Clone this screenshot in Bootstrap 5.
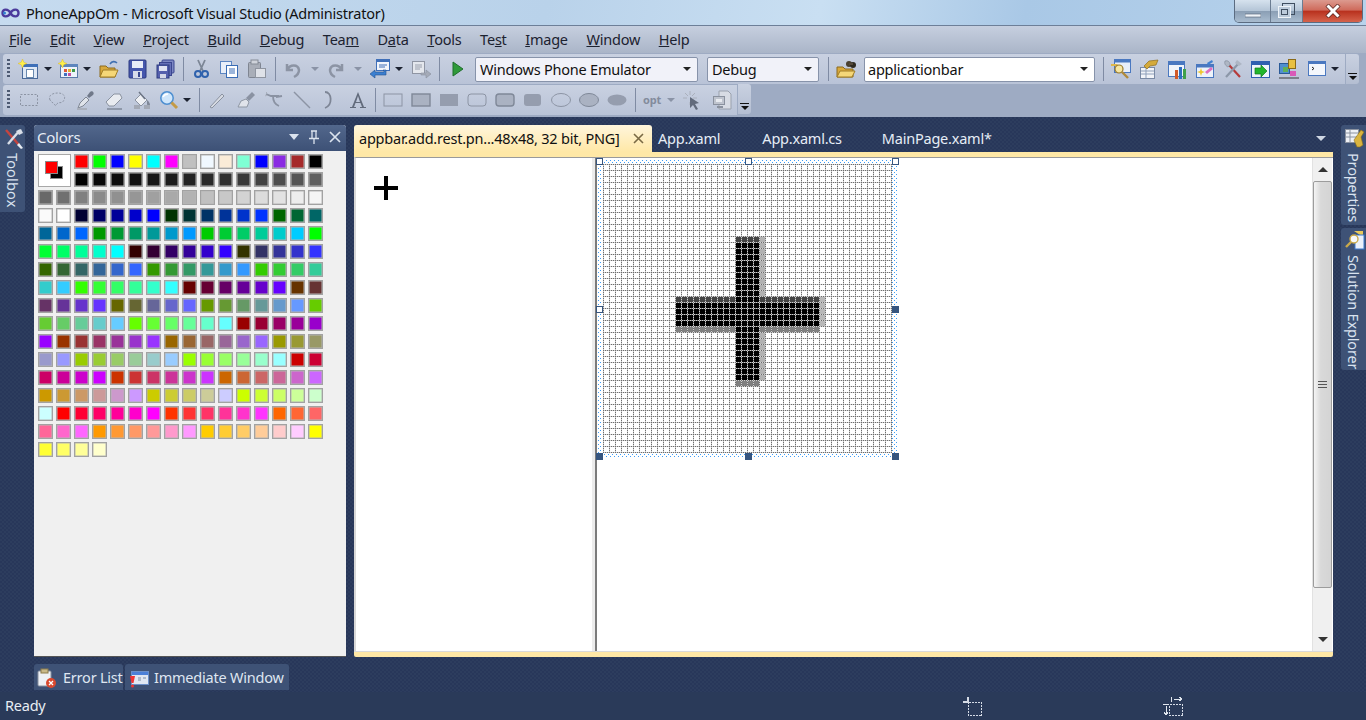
<!DOCTYPE html>
<html lang="en">
<head>
<meta charset="utf-8">
<title>PhoneAppOm - Microsoft Visual Studio</title>
<link rel="stylesheet" href="https://cdn.jsdelivr.net/npm/bootstrap@5.3.0/dist/css/bootstrap.min.css">
<style>
html,body{height:720px;overflow:hidden}
body{width:1366px;font-family:"Noto Sans","Open Sans","Liberation Sans",sans-serif;font-size:14.5px;letter-spacing:-.22px;background:#2b3a59;color:#1b1b1b}
.app-col{height:720px}
.title-strip{height:26px;background:linear-gradient(100deg,#c6dbef 0,#b9d2ea 40%,#c9dff2 60%,#a9c8e6 75%,#b8d3ec 100%);border-bottom:1px solid #6d7f98;flex:none}
.title-logo{margin:8px 0 0 1px}
.title-txt{margin:3px 0 0 6px;font-size:14.5px;color:#111;white-space:nowrap}
.win-btns{margin-right:3px;height:23px;border:1px solid #5b6b80;border-top:0;border-radius:0 0 5px 5px;overflow:hidden}
.wb-min{width:36px;background:linear-gradient(#d6e2ee 0,#b3c4d6 50%,#8b9fb5 52%,#a9bccf 100%);border-right:1px solid #6b7d92}
.wb-max{width:32px;background:linear-gradient(#d6e2ee 0,#b3c4d6 50%,#8b9fb5 52%,#a9bccf 100%);border-right:1px solid #6b7d92}
.wb-close{width:59px;background:linear-gradient(#dc9a8f 0,#cf6b5c 45%,#b9321f 52%,#d5634c 100%)}
.menu-strip{height:27px;background:linear-gradient(#c6cfdf,#aab5c8);flex:none}
.menu-strip .nav-link{padding:0;color:#1c2230;font-size:14.5px;line-height:27px}
.mi1{margin-left:9px}.mi2{margin-left:18.6px}
.bars{height:64px;background:#9eabc3;padding-top:1px;flex:none}
.tbar{height:30px;margin-left:3px;background:linear-gradient(#c9d1e1,#b9c3d7);border-radius:3px 0 0 3px;padding-left:4px}
.tbar-a{width:1342px}.tbar-b{width:734px;margin-top:1px}
.more{width:13px;height:30px;background:linear-gradient(#c9d1e1,#b4bed2);border-radius:0 3px 3px 0;margin-left:1px;padding-bottom:4px}
.more i{display:block;width:9px;height:1px;background:#111;margin:0 auto 2px}
.more b{display:block;width:0;margin:0 auto;border:4px solid transparent;border-bottom:0;border-top-color:#111}
.grip{width:3px;height:20px;background:repeating-linear-gradient(#4d5a72 0 2px,transparent 2px 4px);flex:none}
.sep{width:1px;height:24px;background:#7f8ba3;flex:none}
.ic{width:20px;height:20px;flex:none;display:block}
.car{width:0;flex:none;border:4px solid transparent;border-bottom:0;border-top-color:#1c2230;box-sizing:content-box}
.car-off{border-top-color:#8a93a6}
.g4{margin-left:4px}.g5{margin-left:5px}.g6{margin-left:6px}.g7{margin-left:7px}.g8{margin-left:8px}.g9{margin-left:9px}.g10{margin-left:10px}
.combo{height:25px;background:#f1f2f9;border:1px solid #8793aa;border-radius:2px;padding:0 4px;font-size:14.5px;line-height:23px;color:#111;white-space:nowrap;flex:none}
.combo .car{border-top-color:#222;margin-right:2px}
.cb-a{width:223px}.cb-b{width:112px}.cb-c{width:231px;background:#fff;padding-left:3px}
.opt-txt{width:20px;font-size:11px;font-weight:700;color:#838b9c;flex:none}
.work{height:575px;flex:none;background:repeating-conic-gradient(#2d3d5e 0 25%,#28375a 0 50%) 0 0/4px 4px}
.rail-l{width:34px;flex:none}
.rail-r{width:25px;flex:none;margin-left:8px;padding-top:8px}
.side-tab{background:#3e5276;color:#d9e2ef;font-size:14.5px;letter-spacing:-.15px;writing-mode:vertical-rl;line-height:25px;width:25px;white-space:nowrap}
.st-box{height:87px;margin-top:8px;border-radius:0 3px 3px 0;padding-top:3px;letter-spacing:.15px}
.st-p{height:100px;border-radius:3px 0 0 3px;padding-top:3px;margin-bottom:3px}
.st-s{height:142px;border-radius:3px 0 0 3px;padding-top:2px}
.st-ic{margin-bottom:5px;margin-left:2px}
.st-ic-l{margin-bottom:3px;margin-left:3px}
.mid{width:1299px;flex:none}
.top-row{height:532px;margin-top:8px}
.colors-box{width:312px;flex:none;background:#f0f0f0;border:0;border-radius:3px 3px 0 0;border-bottom:1px solid #555}
.colors-head{height:26px;background:linear-gradient(#52678c,#3d5176);color:#e8eef6;font-size:15px;padding:0 5px 2px 3px;border-radius:3px 3px 0 0;flex:none}
.colors-head svg{flex:none}
.swatches{margin:3px 0 0 4px;display:grid;grid-template-columns:repeat(16,15px);grid-auto-rows:15px;gap:3px}
.sw{border:1px solid #a2a2a2;box-shadow:inset 0 0 0 .5px #b5b5b5}
.sw-big{grid-column:span 2;grid-row:span 2;border:1px solid #a8a8a8;background:#fff;position:relative}
.fg-c,.bg-c{position:absolute;width:13px;height:13px;border:1px solid #8a8a8a}
.fg-c{left:6px;top:6px;background:#f00;z-index:1}
.bg-c{left:11px;top:11px;background:#000}
.doc{width:979px;margin-left:8px;flex:none}
.doc-tabs{height:27px;flex:none}
.dt-on{width:298px;height:27px;background:linear-gradient(#fff5dc,#ffe8a6);border-radius:3px 3px 0 0;padding:0 8px 0 5px;font-size:14.5px;color:#111;white-space:nowrap;flex:none}
.dt-txt{color:#e6edf6;font-size:14.5px;white-space:nowrap;flex:none}
.dt1{margin-left:6px}.dt2{margin-left:42px}.dt3{margin-left:40px}
.dt-drop{margin-left:auto;margin-right:7px;border:5px solid transparent;border-bottom:0;border-top-color:#cfd7e3;width:0;box-sizing:content-box}
.doc-edge{height:5px;background:#ffe8a6;flex:none}
.doc-body{height:494px;flex:none;background:#fff;margin-left:0;border-top:1px solid #9a9a9a;border-left:2px solid #d8d8d8}
.doc-end{height:6px;flex:none;background:#ffe8a6;border-top:1px solid #dadada;border-radius:0 0 2px 2px}
.preview{width:236px;flex:none;padding:6px 0 0 6px}
.splitter{width:5px;flex:none;background:#ececec;border-right:2px solid #7b7b7b}
.canvas-pane{flex:1 1 auto;min-width:0}
.sel-frame{position:relative;width:299px;height:297px;margin:2px 0 0 1px}
.sel-frame svg{display:block}
.hd{position:absolute;width:7px;height:7px;border:1px solid #36557f;background:#36557f}
.hd-w{background:#fff}
.hl{left:-2px}.hc{left:147px}.hr{left:294px}
.ht{top:-2px}.hm{top:146px}.hb{top:293px}
.scr{width:20px;flex:none;margin-right:1px;background:#f0f0f0;border-left:1px solid #e2e2e2;padding-top:0}
.scr-btn{height:23px;flex:none}
.scr-up{width:0;border:5px solid transparent;border-top:0;border-bottom-color:#333}
.scr-dn{width:0;border:5px solid transparent;border-bottom:0;border-top-color:#333}
.scr-thumb{height:407px;flex:none;background:linear-gradient(90deg,#f4f4f4,#d9d9d9 40%,#d4d4d4);border:1px solid #9c9c9c;border-radius:2px}
.scr-lines{width:9px;height:7px;background:repeating-linear-gradient(#555 0 1px,transparent 1px 3px)}
.bot-row{height:26px;margin-top:7px}
.bot-tab{height:26px;background:#3e5276;color:#dfe6f1;font-size:14.5px;border-radius:3px 3px 0 0;white-space:nowrap;flex:none;padding-top:2px}
.bt1{width:89px;padding-left:2px}.bt2{width:164px;margin-left:2px;padding-left:4px}
.bt-txt{margin-left:5px}
.bt1 .bt-txt{margin-left:7px}
.stat{height:28px;flex:none;background:#2a3a59;color:#e8edf4;font-size:14.5px;padding-left:5px}
.stat-a{margin-left:917px}.stat-b{margin-left:181px}
</style>
</head>
<body>
<div class="app-col d-flex flex-column">

<header class="title-strip d-flex align-items-start">
  <svg class="title-logo" width="19" height="10" viewBox="0 0 19 10"><path d="M1.500 5c0-5 6-4 8 0s8 5 8 0-6-4-8 0-8 5-8 0z" fill="none" stroke="#4b3a9c" stroke-width="2.400"/><circle cx="3.500" cy="5" r="1.500" fill="#2f7fd0"/></svg>
  <span class="title-txt">PhoneAppOm - Microsoft Visual Studio (Administrator)</span>
  <div class="win-btns d-flex ms-auto">
    <div class="wb-min d-flex align-items-center justify-content-center"><svg width="16" height="14" viewBox="0 0 16 14"><rect x="0" y="10" width="16" height="3" fill="#eef3f8" stroke="#4d5d70" stroke-width=".6"/></svg></div>
    <div class="wb-max d-flex align-items-center justify-content-center"><svg width="17" height="16" viewBox="0 0 17 16"><rect x="4.500" y=".5" width="12" height="11" fill="none" stroke="#3f4e60"/><rect x=".5" y="3.500" width="12" height="11" fill="#bccbdb" stroke="#eef3f8"/><rect x="3.500" y="6.500" width="6" height="5" fill="none" stroke="#3f4e60"/></svg></div>
    <div class="wb-close d-flex align-items-center justify-content-center"><svg width="16" height="14" viewBox="0 0 16 14"><path d="M2 1l12 12M14 1L2 13" stroke="#5c2a25" stroke-width="4.400"/><path d="M2.500 1.500l11 11M13.500 1.500l-11 11" stroke="#fff" stroke-width="3"/></svg></div>
  </div>
</header>

<nav class="menu-strip nav align-items-center flex-nowrap">
  <a class="nav-link mi1" href="#"><u>F</u>ile</a>
  <a class="nav-link mi2" href="#"><u>E</u>dit</a>
  <a class="nav-link mi2" href="#"><u>V</u>iew</a>
  <a class="nav-link mi2" href="#"><u>P</u>roject</a>
  <a class="nav-link mi2" href="#"><u>B</u>uild</a>
  <a class="nav-link mi2" href="#"><u>D</u>ebug</a>
  <a class="nav-link mi2" href="#">Tea<u>m</u></a>
  <a class="nav-link mi2" href="#">D<u>a</u>ta</a>
  <a class="nav-link mi2" href="#"><u>T</u>ools</a>
  <a class="nav-link mi2" href="#">Te<u>s</u>t</a>
  <a class="nav-link mi2" href="#"><u>I</u>mage</a>
  <a class="nav-link mi2" href="#"><u>W</u>indow</a>
  <a class="nav-link mi2" href="#"><u>H</u>elp</a>
</nav>

<section class="bars">
  <div class="d-flex">
  <div class="tbar tbar-a d-flex align-items-center">
    <span class="grip"></span>
    <svg class="ic g8" viewBox="0 0 20 20"><rect x="4.500" y="5.500" width="15" height="14" fill="#dfe8f5" stroke="#4a6a9a"/><rect x="4" y="5" width="16" height="3" fill="#3f70b8"/><rect x="8.500" y="10.500" width="7" height="8" fill="#fff" stroke="#6a8ab0"/><path d="M4.500 0l1.300 3.200 3.200 1.300-3.200 1.300-1.300 3.200-1.300-3.200L0 4.500l3.200-1.300z" fill="#fff04a" stroke="#d8b020" stroke-width=".4"/></svg>
    <span class="car g6"></span>
    <svg class="ic g6" viewBox="0 0 20 20"><rect x="2.500" y="5.500" width="17" height="13" fill="#eef3fa" stroke="#5a7aa8"/><rect x="2" y="5" width="18" height="3" fill="#5f86bd"/><rect x="6" y="10" width="3" height="3" fill="#e05a3a"/><rect x="10" y="10" width="3" height="3" fill="#e6b030"/><rect x="14" y="10" width="3" height="3" fill="#3f9a4a"/><rect x="6" y="14" width="3" height="3" fill="#3f70c0"/><rect x="10" y="14" width="3" height="3" fill="#c04fa0"/><path d="M4.500 0l1.300 3.200 3.200 1.300-3.200 1.300-1.300 3.200-1.300-3.200L0 4.500l3.200-1.300z" fill="#fff04a" stroke="#d8b020" stroke-width=".4"/></svg>
    <span class="car g5"></span>
    <svg class="ic g8" viewBox="0 0 20 20"><path d="M1 7h6l2 2h7v9H1z" fill="#d9a93c" stroke="#8c6b1e"/><path d="M1 18l3-7h15l-3 7z" fill="#f5d778" stroke="#a07d26"/><path d="M11 5c2-3 5-3 7-1" fill="none" stroke="#3f6fb0" stroke-width="1.600"/></svg>
    <svg class="ic g9" viewBox="0 0 20 20"><rect x="1" y="1" width="17" height="18" rx="1" fill="#4657ad" stroke="#2c3a80"/><rect x="4" y="2" width="11" height="7" fill="#e8ecf8"/><rect x="5" y="12" width="9" height="7" fill="#d8dcea"/><rect x="10" y="13" width="2" height="5" fill="#3a4890"/></svg>
    <svg class="ic g8" viewBox="0 0 20 20"><rect x="6" y="1" width="12" height="13" rx="1" fill="#7d88c4" stroke="#3b4690"/><rect x="3.500" y="3.500" width="12" height="13" fill="#6570b8" stroke="#3b4690"/><rect x="1" y="6" width="12" height="13" fill="#5560ad" stroke="#2c3a80"/><rect x="3" y="7" width="8" height="5" fill="#dfe3f3"/><rect x="4" y="15" width="6" height="4" fill="#d4d8e8"/></svg>
    <span class="sep g7"></span>
    <svg class="ic g8" viewBox="0 0 20 20"><path d="M6 1l5 11M13 1L8 12" stroke="#7c8695" stroke-width="1.800"/><circle cx="6" cy="15" r="3" fill="none" stroke="#2f62ad" stroke-width="2"/><circle cx="13" cy="15" r="3" fill="none" stroke="#2f62ad" stroke-width="2"/></svg>
    <svg class="ic g7" viewBox="0 0 20 20"><rect x="1.500" y="2.500" width="11" height="12" fill="#e9eff9" stroke="#5c86c2"/><rect x="7.500" y="6.500" width="11" height="12" fill="#fff" stroke="#3a6db5"/><path d="M10 10h6M10 12h6M10 14h6" stroke="#3a6db5"/></svg>
    <svg class="ic g8" viewBox="0 0 20 20"><rect x="1.500" y="3.500" width="12" height="15" rx="1" fill="#a9aeb8" stroke="#7f8591"/><rect x="4" y="1" width="7" height="4" fill="#cfd3da" stroke="#858b96"/><rect x="8.500" y="9.500" width="10" height="9" fill="#dfe2e8" stroke="#8f95a0"/></svg>
    <span class="sep g8"></span>
    <svg class="ic g7" viewBox="0 0 20 20"><path d="M4 5v6h6M4 11c3-6 11-6 12 0 0 4-3 6-5 7" fill="none" stroke="#8c94a4" stroke-width="2.500"/></svg>
    <span class="car car-off g8"></span>
    <svg class="ic g7" viewBox="0 0 20 20"><path d="M16 5v6h-6M16 11c-3-6-11-6-12 0 0 4 3 6 5 7" fill="none" stroke="#8c94a4" stroke-width="2.500"/></svg>
    <span class="car car-off g8"></span>
    <svg class="ic g8" viewBox="0 0 20 20"><rect x="6.500" y=".5" width="13" height="11" fill="#f2f5fb" stroke="#3f6fb8"/><rect x="7" y="1" width="12" height="2" fill="#3f6fb8"/><path d="M9 6h8M9 8h6" stroke="#3f6fb8"/><path d="M0 15l5-4v2h9v-1l-1-1h3v5H5v3z" fill="#3b7fd0" stroke="#22508f" stroke-width=".6"/></svg>
    <span class="car g5"></span>
    <svg class="ic g8" viewBox="0 0 20 20"><rect x="1.500" y="2.500" width="12" height="12" fill="#e4e7ed" stroke="#8f95a3"/><path d="M4 6h7M4 8h7M4 10h5" stroke="#9aa0ad"/><path d="M10 14h5v-3l5 4-5 4v-3h-5z" fill="#a5abb8" stroke="#8a909e" stroke-width=".6"/></svg>
    <span class="sep g8"></span>
    <svg class="ic g8" viewBox="0 0 20 20"><path d="M5 3l10 7-10 7z" fill="#2f9a3a" stroke="#1f6f2c"/></svg>
    <div class="combo cb-a g7 d-flex align-items-center justify-content-between"><span>Windows Phone Emulator</span><span class="car"></span></div>
    <div class="combo cb-b g9 d-flex align-items-center justify-content-between"><span>Debug</span><span class="car"></span></div>
    <span class="sep g9"></span>
    <svg class="ic g7" viewBox="0 0 20 20"><path d="M1 8h6l2 2h8v8H1z" fill="#d9a93c" stroke="#8c6b1e"/><path d="M1 18l3-6h15l-3 6z" fill="#f5d778" stroke="#a07d26"/><circle cx="13" cy="5" r="3" fill="#4a4030"/><circle cx="17" cy="6" r="3" fill="#2f2a20"/><rect x="13" y="4" width="4" height="2" fill="#55493a"/></svg>
    <div class="combo cb-c g8 d-flex align-items-center justify-content-between"><span>applicationbar</span><span class="car"></span></div>
    <span class="sep g8"></span>
    <svg class="ic g7" viewBox="0 0 20 20"><rect x="3.500" y=".5" width="16" height="13" fill="#e8eef8" stroke="#4a78c0"/><rect x="4" y="1" width="15" height="2.500" fill="#4a78c0"/><path d="M0 5h6l2 2H0z" fill="#e0b84a"/><circle cx="8" cy="10" r="4" fill="#f7e6a2" stroke="#9a7a2a" stroke-width="1.200"/><path d="M11 13l6 6" stroke="#b08a3a" stroke-width="2.400"/></svg>
    <svg class="ic g8" viewBox="0 0 20 20"><rect x="1.500" y="8.500" width="14" height="11" fill="#f2f4f8" stroke="#7a8aa5"/><path d="M2 12h13M2 15h13M7 9v10" stroke="#8fa0ba"/><path d="M5 7l5-5 9-1-2 5-6 1-3 3z" fill="#d4aa3c" stroke="#8f6f20" stroke-width=".7"/></svg>
    <svg class="ic g8" viewBox="0 0 20 20"><rect x="1.500" y="2.500" width="16" height="15" fill="#f0f4fa" stroke="#4a78c0"/><rect x="2" y="3" width="15" height="3" fill="#4a78c0"/><rect x="8" y="11" width="3" height="9" fill="#d05a2a"/><rect x="12" y="8" width="3" height="12" fill="#2f6fc0"/><rect x="16" y="10" width="3" height="10" fill="#3fa04a"/></svg>
    <svg class="ic g8" viewBox="0 0 20 20"><rect x="1.500" y="5.500" width="17" height="13" fill="#eef3fa" stroke="#4a78c0"/><rect x="2" y="6" width="16" height="2.500" fill="#4a78c0"/><path d="M6 9l1 3 3 1-3 1-1 3-1-3-3-1 3-1z" fill="#f0c830"/><path d="M10 13l6-5 2 2-6 5z" fill="#dd6fc0"/><path d="M12 4l5-3 1 2-5 3z" fill="#3f7fd0"/></svg>
    <svg class="ic g8" viewBox="0 0 20 20"><path d="M17 18L6 6" stroke="#b53a3a" stroke-width="2.200"/><path d="M3 18L16 4" stroke="#8c97a8" stroke-width="2.200"/><path d="M14 1l5 4-3 2-4-3z" fill="#aeb6c4"/><path d="M2 2c3-1 5 1 5 4L5 8C3 7 1 5 2 2z" fill="#aeb6c4" stroke="#7a8494" stroke-width=".6"/></svg>
    <svg class="ic g8" viewBox="0 0 20 20"><rect x=".5" y="2.500" width="18" height="16" fill="#eef3fa" stroke="#2f5fb0"/><rect x="1" y="3" width="17" height="3" fill="#2f5fb0"/><path d="M4 9h6V6l6 6-6 6v-3H4z" fill="#22b52c" stroke="#137a1c" stroke-width=".7"/></svg>
    <svg class="ic g8" viewBox="0 0 20 20"><rect x=".5" y="4.500" width="10" height="10" fill="#4f8fd0" stroke="#2a5a98"/><rect x="4" y="8" width="5" height="5" fill="#5fb05a"/><rect x="9.500" y=".5" width="7" height="9" fill="#e8c040" stroke="#8a6a18"/><rect x="11" y="12" width="6" height="5" fill="#d95ab8"/><rect y="18" width="20" height="2" fill="#7a808a"/></svg>
    <svg class="ic g8" viewBox="0 0 20 20"><rect x="1.500" y="2.500" width="17" height="14" fill="#f4f7fc" stroke="#4a78c0"/><rect x="2" y="3" width="16" height="2" fill="#4a78c0"/><path d="M5 8l2 1.500L5 11" fill="none" stroke="#222"/></svg>
    <span class="car g4"></span>
  </div>
  <div class="more d-flex flex-column justify-content-end"><i></i><b></b></div>
  </div>

  <div class="d-flex">
  <div class="tbar tbar-b d-flex align-items-center">
    <span class="grip"></span>
    <svg class="ic g9" viewBox="0 0 20 20"><rect x="1.500" y="4.500" width="17" height="11" fill="none" stroke="#8c94a4" stroke-dasharray="2 1.500"/></svg>
    <svg class="ic g8" viewBox="0 0 20 20"><path d="M3 10c-2-5 3-7 8-7s8 3 6 7-4 2-6 3-2 4-3 2-3-2-5-5z" fill="none" stroke="#8c94a4" stroke-dasharray="2 1.500"/></svg>
    <svg class="ic g9" viewBox="0 0 20 20"><path d="M2 18l2-5 6-6 3 3-6 6z" fill="#dfe3ea" stroke="#7f8794"/><path d="M11 6l3-4c2-2 5 1 3 3l-4 3z" fill="#70798a"/><path d="M1 19h10" stroke="#aab0bc" stroke-width="2"/></svg>
    <svg class="ic g8" viewBox="0 0 20 20"><path d="M2 12l8-8h6l2 4-8 8H5z" fill="#e8ebf0" stroke="#8a92a0"/><path d="M3 19h15" stroke="#7a8494" stroke-width="1.400"/></svg>
    <svg class="ic g8" viewBox="0 0 20 20"><path d="M3 10l6-6 6 6-6 6z" fill="#eef0f4" stroke="#8a92a0"/><path d="M7 2l6 7" stroke="#6d7686" stroke-width="1.500"/><path d="M15 10c2 2 3 3 3 5s-3 1-3-1z" fill="#7f8797"/><rect x="2" y="15" width="6" height="4" fill="#a3a9b5"/><rect x="12" y="15" width="6" height="4" fill="#a3a9b5"/></svg>
    <svg class="ic g7" viewBox="0 0 20 20"><circle cx="8" cy="8" r="6.200" fill="#cfe6fb" stroke="#4e8fd0" stroke-width="1.500"/><path d="M4 7c1-2 3-3 5-3" stroke="#fff" stroke-width="1.500" fill="none"/><path d="M12.500 12.500L18 18" stroke="#c49a45" stroke-width="3"/></svg>
    <span class="car g4"></span>
    <span class="sep g8"></span>
    <svg class="ic g7" viewBox="0 0 20 20"><path d="M3 17L15 4l2 2L5 18z" fill="#d6dae2" stroke="#8a92a0"/></svg>
    <svg class="ic g9" viewBox="0 0 20 20"><path d="M2 17l3-6 5-2 3 3-2 5z" fill="#e0e3ea" stroke="#8f97a4"/><path d="M10 8l6-6 3 3-6 6z" fill="#8a92a2"/></svg>
    <svg class="ic g9" viewBox="0 0 20 20"><path d="M1 4l5 2h8M8 6c0 4 1 8 6 10M11 7l6-1" fill="none" stroke="#8a92a2" stroke-width="1.800"/><path d="M1 2l1 1M0 6l2-1" stroke="#aab0bc"/></svg>
    <svg class="ic g7" viewBox="0 0 20 20"><path d="M2 2l16 16" stroke="#8c94a4" stroke-width="1.500"/></svg>
    <svg class="ic g6" viewBox="0 0 20 20"><path d="M7 2c7 0 8 13 0 16" fill="none" stroke="#7d8595" stroke-width="1.800"/></svg>
    <svg class="ic g10" viewBox="0 0 20 20"><path d="M10 2l6 15h2v1h-6v-1h2l-1.500-4h-5L6 17h2v1H2v-1h2zM10 6l-2 6h4z" fill="#626b7c"/></svg>
    <span class="sep g7"></span>
    <svg class="ic g7" viewBox="0 0 20 20"><rect x="1" y="4" width="18" height="12" fill="none" stroke="#8c94a4"/></svg>
    <svg class="ic g8" viewBox="0 0 20 20"><rect x="1" y="4" width="18" height="12" fill="#aab2c2" stroke="#7f8898" stroke-width="1.400"/></svg>
    <svg class="ic g8" viewBox="0 0 20 20"><rect x="1" y="4" width="18" height="12" fill="#959dae"/></svg>
    <svg class="ic g8" viewBox="0 0 20 20"><rect x="1" y="4" width="18" height="12" rx="3" fill="none" stroke="#8c94a4"/></svg>
    <svg class="ic g8" viewBox="0 0 20 20"><rect x="1" y="4" width="18" height="12" rx="3" fill="#aab2c2" stroke="#7f8898" stroke-width="1.400"/></svg>
    <svg class="ic g8" viewBox="0 0 20 20"><rect x="1" y="4" width="17" height="12" rx="3" fill="#959dae"/></svg>
    <svg class="ic g8" viewBox="0 0 20 20"><ellipse cx="10" cy="10" rx="9.500" ry="6.500" fill="none" stroke="#8c94a4"/></svg>
    <svg class="ic g8" viewBox="0 0 20 20"><ellipse cx="10" cy="10" rx="9.500" ry="6.500" fill="#aab2c2" stroke="#7f8898"/></svg>
    <svg class="ic g8" viewBox="0 0 20 20"><ellipse cx="10" cy="10" rx="9.500" ry="5.500" fill="#959dae"/></svg>
    <span class="sep g8"></span>
    <span class="opt-txt g7">opt</span>
    <span class="car car-off g4"></span>
    <svg class="ic g7" viewBox="0 0 20 20"><path d="M8 1v4M8 12v3M1 8h4M11 8h4M3 3l3 3M13 3l-3 3" stroke="#aab0bc"/><path d="M8 7l9 6-4 1 3 5-2 1-3-5-3 3z" fill="#626b7c"/></svg>
    <svg class="ic g10" viewBox="0 0 20 20"><path d="M7 1h9l3 3v15H7z" fill="#d8dce4" stroke="#9aa1ad"/><rect x="1.500" y="6.500" width="11" height="8" fill="#bfc4ce" stroke="#8a919e"/><rect x="4" y="9" width="6" height="3" fill="#e8ebf0"/><path d="M5 17h6" stroke="#8a919e" stroke-width="2"/></svg>
  </div>
  <div class="more d-flex flex-column justify-content-end"><i></i><b></b></div>
  </div>
</section>

<main class="work d-flex">
  <div class="rail-l">
    <div class="side-tab st-box d-flex align-items-center">
      <svg class="st-ic-l" width="20" height="22" viewBox="0 0 20 22"><path d="M2 2l13 15" stroke="#c6443f" stroke-width="2.400"/><path d="M16 2L4 16" stroke="#d8dee8" stroke-width="2.400"/><path d="M12 3l5-2 2 4-4 2z" fill="#d8dee8"/><path d="M15 15l4 5-2 1-4-4z" fill="#e8edf3"/></svg>
      <span>Toolbox</span>
    </div>
  </div>

  <div class="mid d-flex flex-column">
    <div class="top-row d-flex">
      <aside class="card colors-box">
        <div class="colors-head d-flex align-items-center">
          <span>Colors</span>
          <svg class="ms-auto" width="10" height="6" viewBox="0 0 10 6"><path d="M0 0h10L5 6z" fill="#dbe3ee"/></svg>
          <svg class="g10" width="10" height="14" viewBox="0 0 10 14"><path d="M2 1h6M3 1v7M7 1v7M0 8.500h10M5 9v5" stroke="#dbe3ee" stroke-width="1.300" fill="none"/></svg>
          <svg class="g10" width="12" height="12" viewBox="0 0 12 12"><path d="M1 1l10 10M11 1L1 11" stroke="#dbe3ee" stroke-width="1.700"/></svg>
        </div>
        <div class="swatches" id="swatches">
          <div class="sw-big"><span class="bg-c"></span><span class="fg-c"></span></div>
        </div>
      </aside>

      <section class="doc d-flex flex-column">
        <div class="doc-tabs nav d-flex align-items-center flex-nowrap">
          <div class="dt-on d-flex align-items-center justify-content-between">
            <span>appbar.add.rest.pn...48x48, 32 bit, PNG]</span>
            <svg width="11" height="11" viewBox="0 0 11 11"><path d="M1 1l9 9M10 1l-9 9" stroke="#7a6a45" stroke-width="1.600"/></svg>
          </div>
          <span class="dt-txt dt1">App.xaml</span>
          <span class="dt-txt dt2">App.xaml.cs</span>
          <span class="dt-txt dt3">MainPage.xaml*</span>
          <span class="dt-drop"></span>
        </div>
        <div class="doc-edge"></div>
        <div class="doc-body d-flex">
          <div class="preview">
            <svg width="48" height="48" viewBox="0 0 48 48" class="d-block"><path d="M22 12h4v10h10v4H26v10h-4V26H12v-4h10z" fill="#000"/></svg>
          </div>
          <div class="splitter"></div>
          <div class="canvas-pane">
            <div class="sel-frame">
              <svg width="299" height="297" viewBox="0 0 299 297" shape-rendering="crispEdges">
                <defs>
                  <pattern id="dotp" width="4" height="4" patternUnits="userSpaceOnUse">
                    <rect x="0" y="0" width="1" height="1" fill="#3d9cf5"/>
                    <rect x="2" y="2" width="1" height="1" fill="#3d9cf5"/>
                  </pattern>
                  <pattern id="gridp" x="5" y="4" width="6" height="6" patternUnits="userSpaceOnUse">
                    <path d="M0 0h6v1H0zM0 0h1v6H0z" fill="#cfcfcf"/>
                    <path d="M0 0h1v1H0zM2 0h1v1H2zM4 0h1v1H4zM0 2h1v1H0zM0 4h1v1H0z" fill="#6e6e6e"/>
                  </pattern>
                </defs>
                <rect width="299" height="297" fill="#fff"/>
                <rect width="299" height="297" fill="url(#dotp)"/>
                <rect x="4" y="3" width="290" height="290" fill="#fff"/>
                <g transform="translate(5 4)">
                  <rect x="156" y="72" width="6" height="144" fill="#b2b2b2"/>
                  <rect x="216" y="132" width="6" height="30" fill="#b8b8b8"/>
                  <rect x="72" y="132" width="144" height="6" fill="#444"/>
                  <rect x="72" y="162" width="144" height="6" fill="#808080"/>
                  <rect x="132" y="72" width="24" height="6" fill="#444"/>
                  <rect x="132" y="216" width="24" height="6" fill="#808080"/>
                  <rect x="132" y="78" width="24" height="138" fill="#000"/>
                  <rect x="72" y="138" width="144" height="24" fill="#000"/>
                </g>
                <rect x="5" y="4" width="289" height="289" fill="url(#gridp)"/>
              </svg>
              <span class="hd hd-w hl ht"></span><span class="hd hd-w hc ht"></span><span class="hd hd-w hr ht"></span>
              <span class="hd hd-w hl hm"></span><span class="hd hr hm"></span>
              <span class="hd hl hb"></span><span class="hd hc hb"></span><span class="hd hr hb"></span>
            </div>
          </div>
          <div class="scr d-flex flex-column">
            <div class="scr-btn d-flex align-items-center justify-content-center"><span class="scr-up"></span></div>
            <div class="scr-thumb d-flex align-items-center justify-content-center"><span class="scr-lines"></span></div>
            <div class="scr-btn d-flex align-items-center justify-content-center mt-auto"><span class="scr-dn"></span></div>
          </div>
        </div>
        <div class="doc-end"></div>
      </section>
    </div>

    <div class="bot-row d-flex">
      <div class="bot-tab bt1 d-flex align-items-center">
        <svg width="20" height="22" viewBox="0 0 20 22"><rect x="2" y="4" width="13" height="15" rx="1" fill="#eef1f6" stroke="#8a92a0"/><rect x="5" y="2" width="7" height="4" fill="#c9b98a" stroke="#8c7c4c"/><circle cx="15" cy="16" r="5" fill="#d9492f"/><path d="M13 14l4 4M17 14l-4 4" stroke="#fff" stroke-width="1.300"/></svg>
        <span class="bt-txt">Error List</span>
      </div>
      <div class="bot-tab bt2 d-flex align-items-center">
        <svg width="20" height="20" viewBox="0 0 20 20"><rect x="2.500" y="3.500" width="17" height="13" fill="#dfe6f2" stroke="#6a8ec8"/><rect x="3" y="4" width="16" height="3" fill="#4a7fd8"/><path d="M9 10h3M9 12h3M14 10h3" stroke="#7a8aa0"/><path d="M1 8h5l-1.500 7h-2z" fill="#e33"/><circle cx="3.500" cy="18" r="1.500" fill="#e33"/></svg>
        <span class="bt-txt">Immediate Window</span>
      </div>
    </div>
  </div>

  <div class="rail-r">
    <div class="side-tab st-p d-flex align-items-center">
      <svg class="st-ic" width="20" height="20" viewBox="0 0 20 20"><rect x=".5" y="1.500" width="13" height="13" fill="#eef1f6" stroke="#8a92a0"/><path d="M1 5h12M1 9h12M5 2v12" stroke="#8a92a0"/><path d="M9 12l7-10 3 2-3 5 2 8-3 2h-3z" fill="#d9b440" stroke="#8c6f18" stroke-width=".6"/></svg>
      <span>Properties</span>
    </div>
    <div class="side-tab st-s d-flex align-items-center">
      <svg class="st-ic" width="20" height="20" viewBox="0 0 20 20"><path d="M9 1h9v6z" fill="#e8c85a"/><rect x="10" y="5" width="9" height="14" fill="#eaf0fa" stroke="#3a78d0"/><circle cx="9" cy="9" r="4" fill="#f6f8fb" stroke="#c9a94a" stroke-width="1.400"/><path d="M6 12l-5 5" stroke="#c9a94a" stroke-width="2.400"/></svg>
      <span>Solution Explorer</span>
    </div>
  </div>
</main>

<footer class="stat d-flex align-items-center">
  <span>Ready</span>
  <svg class="stat-a" width="19" height="19" viewBox="0 0 19 19" shape-rendering="crispEdges"><path d="M0 5h6M5 0v5" stroke="#d5dbe6" stroke-width="1.200"/><rect x="5.500" y="5.500" width="13" height="13" fill="none" stroke="#d5dbe6" stroke-dasharray="2 1"/></svg>
  <svg class="stat-b" width="20" height="20" viewBox="0 0 20 20" shape-rendering="crispEdges"><rect x="6.500" y="8.500" width="13" height="11" fill="none" stroke="#d5dbe6" stroke-dasharray="2 1"/><path d="M0 8h6M8 1v5M11 3h8M16 1l3 2-3 2M3 10v9M1 16l2 3 2-3" stroke="#e1e6ee" fill="none"/></svg>
</footer>
</div>

<script src="https://cdn.jsdelivr.net/npm/bootstrap@5.3.0/dist/js/bootstrap.bundle.min.js"></script>
<script>
var named=["#ff0000","#00ff00","#0000ff","#ffff00","#00ffff","#ff00ff","#c0c0c0","#f0f8ff","#faebd7","#7fffd4","#0000ff","#8a2be2","#a52a2a","#000000",
"#000000","#080808","#0e0e0e","#131313","#171717","#1c1c1c","#222222","#292929","#303030","#393939","#424242","#4d4d4d","#555555","#5f5f5f",
"#696969","#707070","#808080","#8b8b8b","#909090","#969696","#a0a0a0","#a9a9a9","#b2b2b2","#c0c0c0","#c8c8c8","#d3d3d3","#dcdcdc","#e2e2e2","#ededed","#f5f5f5",
"#fafafa","#ffffff"];
var lv=["00","33","66","99","cc","ff"],box=document.getElementById("swatches");
lv.forEach(function(r){lv.forEach(function(g){lv.forEach(function(b){if(!(r===g&&g===b))named.push("#"+r+g+b);});});});
named.forEach(function(c){var d=document.createElement("div");d.className="sw";d.style.backgroundColor=c;box.appendChild(d);});
</script>
</body>
</html>
